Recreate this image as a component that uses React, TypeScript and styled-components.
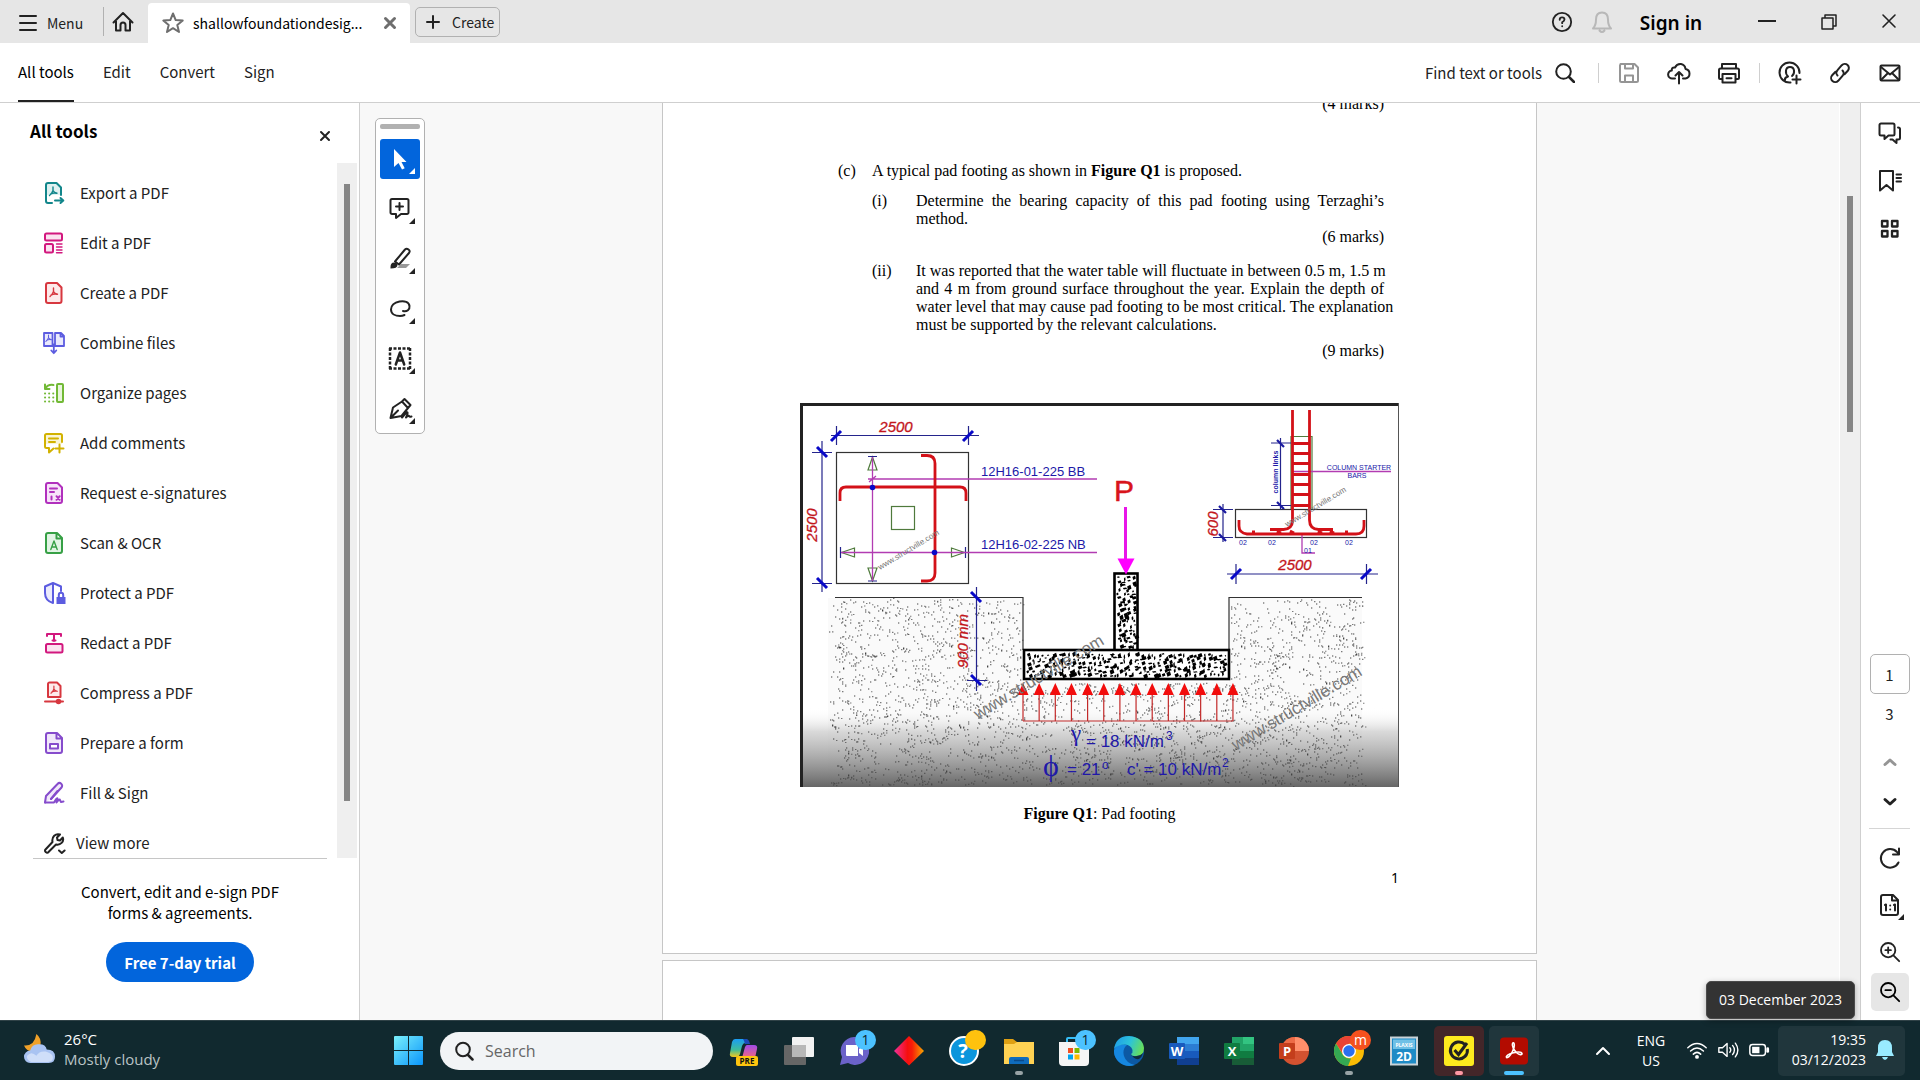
import React from "react";
import styled, { createGlobalStyle, css } from "styled-components";

const uiFont = `"Noto Sans CJK SC", "Noto Sans", sans-serif`;
const shellFont = `"Open Sans", "Noto Sans", sans-serif`;
const ink = "#222";

const GlobalStyle = createGlobalStyle`
  *, *::before, *::after { box-sizing: border-box; }
  html, body { margin: 0; height: 100%; }
  body { font-family: ${uiFont}; color: ${ink}; background: #f8f8f8; overflow: hidden; }
  button, input { font: inherit; color: inherit; }
  button { border: 0; padding: 0; background: none; cursor: pointer; }
  svg { display: block; flex: none; }
`;

const Screen = styled.div`
  display: flex;
  flex-direction: column;
  height: 100vh;
`;

/* ---------- Title bar ---------- */
const TitleBar = styled.header`
  display: flex;
  align-items: center;
  height: 43px;
  background: #e6e6e6;
  font-size: 14px;
  line-height: 20px;
`;
const MenuButton = styled.button`
  display: flex;
  align-items: center;
  gap: 9px;
  width: 103px;
  height: 43px;
  padding: 2px 0 0 18px;
`;
const Divider = styled.span<{ $h: number; $color?: string }>`
  width: 1px;
  height: ${(p) => p.$h}px;
  background: ${(p) => p.$color ?? "#b1b1b1"};
`;
const HomeButton = styled.button`
  display: grid;
  place-items: center;
  width: 44px;
  height: 43px;
  padding-right: 6px;
`;
const Tab = styled.div`
  display: flex;
  align-items: center;
  align-self: flex-end;
  width: 262px;
  height: 40px;
  padding: 0 8px 0 13px;
  border-radius: 4px 4px 0 0;
  background: #fff;
  color: #000;
`;
const TabTitle = styled.span`
  flex: 1;
  padding-left: 8px;
  white-space: nowrap;
`;
const TabIconButton = styled.button`
  display: grid;
  place-items: center;
  height: 24px;
  width: 24px;
`;
const CreateButton = styled.button`
  display: flex;
  align-items: center;
  gap: 12px;
  width: 85px;
  height: 30px;
  margin-left: 5px;
  padding-left: 10px;
  border: 1px solid #b1b1b1;
  border-radius: 5px;
`;
const WindowControls = styled.div`
  display: flex;
  align-items: center;
  height: 43px;
  margin-left: auto;
`;
const WindowButton = styled.button<{ $w: number }>`
  display: grid;
  place-items: center;
  width: ${(p) => p.$w}px;
  height: 40px;
`;
const SignIn = styled.button`
  width: 98px;
  height: 43px;
  margin-right: 14px;
  padding-top: 2px;
  font-family: "Noto Sans", sans-serif;
  font-size: 19px;
  font-weight: 600;
  color: #000;
`;

/* ---------- Tool bar ---------- */
const ToolBar = styled.nav`
  display: flex;
  align-items: center;
  height: 60px;
  border-bottom: 1px solid #cfcfcf;
  background: #fff;
  font-size: 15px;
  line-height: 22px;
`;
const ToolTabs = styled.div`
  display: flex;
  gap: 29px;
  padding-left: 18px;
`;
const ToolTab = styled.button<{ $active?: boolean }>`
  height: 59px;
  border-bottom: 2px solid ${(p) => (p.$active ? ink : "transparent")};
  color: ${(p) => (p.$active ? "#000" : ink)};
`;
const ToolActions = styled.div`
  display: flex;
  align-items: center;
  margin-left: auto;
`;
const FindButton = styled.button`
  display: flex;
  align-items: center;
  gap: 13px;
  padding-right: 23px;
`;
const ActionButton = styled.button`
  display: grid;
  place-items: center;
  width: 50px;
  height: 40px;
`;
const ActionGroup = styled.div`
  display: flex;
  padding: 0 5px;
`;

/* ---------- Side panel ---------- */
const Workspace = styled.div`
  display: flex;
  flex: 1;
  min-height: 0;
`;
const SidePanel = styled.aside`
  display: flex;
  flex-direction: column;
  width: 360px;
  border-right: 1px solid #cfcfcf;
  background: #fff;
`;
const PanelHeader = styled.div`
  display: flex;
  align-items: flex-start;
  justify-content: space-between;
  height: 60px;
  padding: 16px 22px 0 30px;
`;
const PanelTitle = styled.h2`
  margin: 0;
  font-size: 17px;
  line-height: 24px;
  font-weight: 700;
  color: #000;
`;
const PanelClose = styled(TabIconButton)`
  margin-top: 5px;
`;
const PanelBody = styled.div`
  display: flex;
  flex: 1;
  min-height: 0;
  padding-right: 2px;
`;
const ToolList = styled.ul`
  flex: 1;
  margin: 0;
  padding: 5px 0 0 42px;
  list-style: none;
  overflow: hidden;
`;
const ToolItem = styled.button<{ $tight?: boolean }>`
  display: flex;
  align-items: center;
  gap: ${(p) => (p.$tight ? 10 : 14)}px;
  width: 100%;
  height: 50px;
  font-size: 15px;
  line-height: 22px;
  text-align: left;
`;
const ScrollTrack = styled.div<{ $top: string; $bottom: string }>`
  width: 20px;
  padding: ${(p) => p.$top} 7px ${(p) => p.$bottom};
  background: #efefef;
`;
const ScrollThumb = styled.div`
  width: 6px;
  height: 100%;
  background: #868686;
`;
const Promo = styled.div`
  display: flex;
  flex-direction: column;
  align-items: center;
  margin: 0 32px 0 33px;
  padding: 22px 0 38px;
  border-top: 1px solid #c6c6c6;
  color: #000;
  font-size: 15px;
  line-height: 21px;
  text-align: center;
`;
const PromoText = styled.p`
  width: 210px;
  margin: 0 0 19px;
`;
const TrialButton = styled.button`
  width: 148px;
  height: 40px;
  border-radius: 20px;
  background: #0265dc;
  color: #fff;
  font-weight: 700;
`;

/* ---------- Document ---------- */
const Viewer = styled.main`
  position: relative;
  flex: 1;
  min-width: 0;
  overflow: hidden;
  background: #f8f8f8;
`;
const QuickTools = styled.div`
  position: absolute;
  top: 15px;
  left: 15px;
  display: flex;
  flex-direction: column;
  align-items: center;
  gap: 10px;
  width: 50px;
  padding: 5px 0 4px;
  border: 1px solid #b1b1b1;
  border-radius: 5px;
  background: #fff;
`;
const Grip = styled.span`
  width: 40px;
  height: 5px;
  border-radius: 2px;
  background: #b1b1b1;
`;
const QuickTool = styled.button<{ $active?: boolean }>`
  width: 40px;
  height: 40px;
  border-radius: 3px;
  ${(p) => p.$active && css`background: #0265dc;`}
`;
const Pages = styled.div`
  display: flex;
  flex-direction: column;
  align-items: center;
  gap: 6px;
  margin-top: -9px;
`;
const Page = styled.article`
  width: 875px;
  padding: 0 137px 66px;
  border: 1px solid #c6c6c6;
  background: #fff;
  color: #000;
  font-family: "Liberation Serif", serif;
  font-size: 16px;
  line-height: 18px;
`;
const Question = styled.section`
  padding: 0 15px 0 38px;
`;
const Marks = styled.p<{ $before?: number }>`
  margin: ${(p) => p.$before ?? 0}px 0 0;
  text-align: right;
`;
const Clause = styled.div<{ $label: number; $before: number; $indent?: number }>`
  display: grid;
  grid-template-columns: ${(p) => p.$label}px minmax(0, 1fr);
  margin-top: ${(p) => p.$before}px;
  padding-left: ${(p) => p.$indent ?? 0}px;
  text-align: justify;
`;
const Line = styled.span<{ $last?: boolean }>`
  display: block;
  white-space: nowrap;
  text-align-last: ${(p) => (p.$last ? "left" : "justify")};
`;
const Figure = styled.figure`
  margin: 43px 0 0;
`;
const Caption = styled.figcaption`
  margin-top: 18px;
  text-align: center;
`;
const PageNumber = styled.p`
  margin: 46px 0 0;
  font-family: "Noto Sans", sans-serif;
  font-size: 14px;
  text-align: right;
`;
const DocScroll = styled(ScrollTrack)`
  width: 22px;
  border-left: 1px solid #fff;
  border-right: 1px solid #cfcfcf;
`;

/* ---------- Right rail ---------- */
const Rail = styled.aside`
  display: flex;
  flex-direction: column;
  align-items: center;
  width: 59px;
  padding: 6px 2px 9px 0;
  background: #fff;
`;
const RailButton = styled.button<{ $h: number; $active?: boolean }>`
  display: grid;
  place-items: center;
  width: 38px;
  height: ${(p) => p.$h}px;
  border-radius: 5px;
  ${(p) => p.$active && css`background: #e6e6e6;`}
`;
const PageInput = styled.input`
  width: 40px;
  height: 40px;
  margin-top: auto;
  border: 1px solid #b1b1b1;
  border-radius: 5px;
  background: #fff;
  font-size: 15px;
  text-align: center;
`;
const PageTotal = styled.span`
  height: 48px;
  padding-top: 10px;
  font-size: 15px;
  line-height: 20px;
`;
const RailRule = styled.span`
  width: 41px;
  height: 1px;
  margin: 6px 0;
  background: #d5d5d5;
`;

/* ---------- Task bar ---------- */
const TaskBar = styled.footer`
  display: flex;
  align-items: center;
  height: 60px;
  border-top: 1px solid #304247;
  background: #11292f;
  color: #fff;
  font-family: ${shellFont};
  font-size: 15px;
  line-height: 20px;
`;
const Weather = styled.button`
  display: flex;
  align-items: center;
  gap: 9px;
  width: 383px;
  height: 59px;
  padding: 0 0 4px 24px;
  text-align: left;
`;
const Muted = styled.div`
  color: #b9c3c5;
`;
const AppButton = styled.button<{ $bg?: string; $mark?: string; $wide?: boolean }>`
  position: relative;
  display: grid;
  place-items: center;
  width: 50px;
  height: 50px;
  border-radius: 5px;
  background: ${(p) => p.$bg ?? "transparent"};
  ${(p) =>
    p.$mark &&
    css`
      &::after {
        content: "";
        position: absolute;
        bottom: 1px;
        left: 50%;
        width: ${p.$wide ? 20 : 8}px;
        height: 4px;
        border-radius: 2px;
        background: ${p.$mark};
        transform: translateX(-50%);
      }
    `}
`;
const Badge = styled.span<{ $bg: string; $fg?: string }>`
  position: absolute;
  top: 4px;
  right: 3px;
  width: 21px;
  height: 20px;
  border-radius: 10px;
  background: ${(p) => p.$bg};
  color: ${(p) => p.$fg ?? "#10272c"};
  font-size: 14px;
  line-height: 20px;
`;
const SearchBox = styled.label`
  display: flex;
  align-items: center;
  gap: 11px;
  width: 273px;
  height: 38px;
  margin: 0 6px 0 7px;
  padding: 0 14px;
  border-radius: 19px;
  background: #f2f4f6;
  color: #333;
  font-size: 16px;
`;
const SearchInput = styled.input`
  flex: 1;
  min-width: 0;
  padding: 0;
  border: 0;
  outline: 0;
  background: none;
  &::placeholder { color: #666; opacity: 1; }
`;
const AppRow = styled.div`
  display: flex;
  gap: 5px;
`;
const Tray = styled.div`
  display: flex;
  align-items: center;
  margin-left: auto;
  padding-right: 15px;
  font-size: 14px;
`;
const TrayButton = styled.button<{ $w: number }>`
  display: grid;
  place-items: center;
  width: ${(p) => p.$w}px;
  height: 50px;
`;
const StatusIcons = styled.button`
  display: flex;
  justify-content: space-around;
  width: 92px;
  height: 24px;
  margin: 0 4px 0 3px;
`;
const Clock = styled.button`
  position: relative;
  display: flex;
  align-items: center;
  justify-content: flex-end;
  gap: 10px;
  width: 127px;
  height: 50px;
  padding: 0 11px 2px 0;
  border-radius: 5px;
  background: #20363c;
  text-align: right;
`;
const DateTip = styled.span`
  position: absolute;
  right: 50px;
  bottom: 57px;
  width: 149px;
  height: 38px;
  border: 1px solid #4a4a4a;
  border-radius: 5px;
  background: #333;
  box-shadow: 0 2px 6px rgba(0, 0, 0, 0.3);
  line-height: 36px;
  text-align: center;
  white-space: nowrap;
`;

/* ---------- Line icon wrapper ---------- */
type IconProps = { s?: number; c?: string; w?: number; box?: number; children: React.ReactNode };
const Icon = ({ s = 24, c = ink, w = 2, box = 24, children }: IconProps) => (
  <svg width={s} height={s} viewBox={`0 0 ${box} ${box}`} fill="none" stroke={c} strokeWidth={w} strokeLinecap="round" strokeLinejoin="round" aria-hidden="true">
    {children}
  </svg>
);

const Trefoil = ({ x = 0, y = 0, k = 1 }: { x?: number; y?: number; k?: number }) => (
  <path transform={`translate(${x} ${y}) scale(${k})`} strokeWidth="1.4" d="M4 0v3.5Q3.300 6 0.500 8.500M4 3.500Q5 5.500 8 6.200M1.500 7.200Q4 5.600 7.500 6.200" />
);

const toolIcons: Record<string, React.ReactNode> = {
  export: (
    <Icon c="#12868b"><path fill="#dff1f1" stroke="none" d="M4 2h11l4 4v8H4z" /><path d="M10 22H6a2 2 0 0 1-2-2V4a2 2 0 0 1 2-2h8.500L19 6.500V14M13 19.500h8M18.500 17l2.800 2.500-2.800 2.500" /><Trefoil x={7} y={6} /></Icon>
  ),
  edit: (
    <Icon c="#d2187e"><rect x="3" y="2.500" width="17" height="7" rx="1.500" fill="#fbe3f0" /><rect x="3" y="13" width="8" height="8.500" rx="1.500" fill="#fbe3f0" /><path d="M14.500 13H20M14.500 16H20M14.500 19H20M14.500 21.700H20" strokeWidth="1.400" /></Icon>
  ),
  create: (
    <Icon c="#d7373f"><path fill="#fdeaea" d="M6 2h9l4.500 4.500V20a2 2 0 0 1-2 2H6a2 2 0 0 1-2-2V4a2 2 0 0 1 2-2z" /><Trefoil x={7.500} y={7} /></Icon>
  ),
  combine: (
    <Icon c="#5c5ce0" w={1.800}><path fill="#e9e9fc" d="M2 15V2h8.500v13zM13 15V2h6l3 3v10h-9M11.800 13.500V22M9.300 19.500l2.500 2.700 2.500-2.700M18.500 2v3.500H22" /><Trefoil x={3.500} y={4} k={0.750} /></Icon>
  ),
  organize: (
    <Icon c="#72b936"><rect x="15" y="3" width="6" height="18" rx="1" fill="#e8f5dc" /><path d="M3 3.500v4.500h4.500M3.500 7.500Q6 3 11.500 4" /><path strokeDasharray="0.100 4" d="M3 12.500h9M3 16.500h9M3 20.500h9" /></Icon>
  ),
  comment: (
    <Icon c="#d2b200"><path fill="#faf5d5" stroke="none" d="M3 3h17v10H3z" /><path d="M20 11V4.500a1.500 1.500 0 0 0-1.500-1.500h-14A1.500 1.500 0 0 0 3 4.500v11A1.500 1.500 0 0 0 4.500 17H7v4.500l4.500-4M7 7.500h9M7 11h6M17.500 13.500v8M13.500 17.500h8" /></Icon>
  ),
  esign: (
    <Icon c="#b130bd"><path fill="#f7e3f9" d="M6 2h9.500L20 6.500V20a2 2 0 0 1-2 2H6a2 2 0 0 1-2-2V4a2 2 0 0 1 2-2z" /><path d="M8 7.500h7M8 11h4M9.500 15.500v3M14.500 15.200l3.200 3.600M17.700 15.200l-3.200 3.600" /></Icon>
  ),
  ocr: (
    <Icon c="#37a046"><path fill="#e2f4e5" d="M6 2h9l5 5v13a2 2 0 0 1-2 2H6a2 2 0 0 1-2-2V4a2 2 0 0 1 2-2zM14.500 2v5.500H20" /><path strokeWidth="1.400" d="M8.800 18.500 12 10l3.200 8.500M10 16h4" /></Icon>
  ),
  protect: (
    <Icon c="#5c5ce0"><path fill="#ebebfc" stroke="none" d="M3 5l8-3v20C5 19 3 16 3 13z" /><path d="M19 10V5.500L11 2 3 5.500V12c0 5 3 8.500 8 10V2" /><path fill="#5c5ce0" stroke="none" d="M14.500 16h9v7h-9z" /><path d="M16.800 16v-2a2.200 2.200 0 0 1 4.400 0v2" /></Icon>
  ),
  redact: (
    <Icon c="#d2187e"><path d="M5 5V3h14v2M12 3v7M10.500 9.500h3" /><rect x="4" y="13" width="16.500" height="8.500" rx="1.500" fill="#fbe3f0" /></Icon>
  ),
  compress: (
    <Icon c="#d7373f"><path fill="#fdeaea" d="M8 1.500h7l3.500 3.500v11H6V3a1.500 1.500 0 0 1 2-1.500z" /><Trefoil x={8.500} y={5} k={0.850} /><path d="M3 20.500h18" /><circle cx="16.500" cy="20.500" r="1.800" fill="#d7373f" /></Icon>
  ),
  form: (
    <Icon c="#864ccc"><path fill="#f1e8fa" d="M6 2h9l5 5v13a2 2 0 0 1-2 2H6a2 2 0 0 1-2-2V4a2 2 0 0 1 2-2zM14.500 2v5.500H20" /><path fill="#fff" d="M8 13h8v4.500H8z" /></Icon>
  ),
  fill: (
    <Icon c="#864ccc"><path fill="#f1e8fa" d="M3 21.500 4 15 15.500 3a2.500 2.500 0 0 1 4 3.500L9 18" /><path d="M3 21.500h9q3-5 3.500-4t-1 4q3-4 3.500-2.500T19 21l2.500-.5M9 18l6.500-8" /></Icon>
  ),
  more: (
    <Icon><path d="M4.500 21.500a1.800 1.800 0 0 1-1-3L10.500 11c-1-5 3-9 7.500-7.500l-3 3 .5 2.500 2.500.5 2.800-3c1.500 4-2.300 8-6.800 7L7 20.500a2 2 0 0 1-2.500 1zM17 19.500l2.800 2.500 2.800-2.500" /></Icon>
  ),
};

const tools: [string, string][] = [
  ["export", "Export a PDF"],
  ["edit", "Edit a PDF"],
  ["create", "Create a PDF"],
  ["combine", "Combine files"],
  ["organize", "Organize pages"],
  ["comment", "Add comments"],
  ["esign", "Request e-signatures"],
  ["ocr", "Scan & OCR"],
  ["protect", "Protect a PDF"],
  ["redact", "Redact a PDF"],
  ["compress", "Compress a PDF"],
  ["form", "Prepare a form"],
  ["fill", "Fill & Sign"],
  ["more", "View more"],
];

const quickTools: { name: string; active?: boolean; art: React.ReactNode }[] = [
  { name: "Select", active: true, art: <path fill="#fff" stroke="none" d="M14 10v18l4.500-4 3.500 6.500 2.700-1.300L21.500 23h5z" /> },
  { name: "Comment", art: <path d="M12 10h15a1.500 1.500 0 0 1 1.500 1.500v12A1.500 1.500 0 0 1 27 25h-6l-5 4v-4h-4a1.500 1.500 0 0 1-1.500-1.500v-12A1.500 1.500 0 0 1 12 10zM19.500 14v7M16 17.500h7" /> },
  { name: "Highlight", art: <><path stroke="none" fill="#999" d="M21 25h9l-4 4h-9z" /><path d="M15 22.500 25 10.500q1.500-1.500 3.500 0t.5 3.500L19 25.500z" /><path fill={ink} stroke="none" d="M10.500 28q0-4.500 3.500-4.500t3.500 2.500q0 3.500-7 3.500z" /></> },
  { name: "Draw", art: <path d="M23 22c4 1 7-1.500 6.500-5-.5-4-5-5.500-10-4.500-5.500 1-8.500 4.500-8.500 8 0 4.500 4.500 6.500 9 6.500 2 0 3.500-.5 4.500-1" /> },
  { name: "Add text", art: <><path strokeWidth="2.500" strokeDasharray="3 1.500" strokeLinecap="butt" d="M9 9.500h22M9 29.500h22M10 9v21M30 9v21" /><path strokeWidth="2.500" d="M15.800 25.500 20 13.500l4.200 12M17.300 21.500h5.400" /></> },
  { name: "Sign", art: <path d="M10.500 29 13 18.500l9-6 6 6.500-6.500 8zM11 28.500l7-7M22 12.500l2.500-2.500 6 6-2.500 3M22 28.500q5-6 5.500-5t-1.500 5q2.500-2.500 3-1.500t2.500.5" /> },
];

/* ---------- Pad footing drawing ---------- */
const randomSource = (seed: number) => () => {
  seed = (seed * 1664525 + 1013904223) % 4294967296;
  return seed / 4294967296;
};

const soilPath = () => {
  const rnd = randomSource(7);
  let d = "";
  for (let i = 0; i < 2900; i++) {
    const px = Math.round(829 + rnd() * 533);
    const py = Math.round(600 + rnd() * 185);
    const pair = rnd();
    const dy = rnd() * 5 - 2;
    if (px > 1020 && px < 1231 && py < 684) continue;
    d += `M${px} ${py}h1.300`;
    if (pair < 0.4) d += `m2 ${dy.toFixed(1)}h1`;
  }
  return d;
};

const aggregatePath = (x0: number, y0: number, x1: number, y1: number, seed: number) => {
  const rnd = randomSource(seed);
  let d = "";
  for (let y = y0; y < y1 - 3; y += 4) {
    for (let x = x0; x < x1 - 3; x += 5) {
      const px = x + rnd() * 4;
      const py = y + rnd() * 3;
      const a = 1 + rnd() * 3;
      const b = 1 + rnd() * 3;
      d += `M${px.toFixed(1)} ${py.toFixed(1)}l${a.toFixed(1)} ${(-b / 2).toFixed(1)}l${(a / 3).toFixed(1)} ${b.toFixed(1)}l${(-a).toFixed(1)} ${(b / 2).toFixed(1)}z`;
    }
  }
  return d;
};

const Sketch = styled.svg`
  width: 100%;
  height: auto;
  font-family: "Liberation Sans", sans-serif;
`;
const DimText = styled.text`
  fill: #c3161c;
  stroke: #c3161c;
  stroke-width: 0.3px;
  font-size: 15px;
  font-style: italic;
  text-anchor: middle;
`;
const NoteText = styled.text<{ $size: number }>`
  fill: #2018a8;
  font-size: ${(p) => p.$size}px;
`;
const WatermarkText = styled.text<{ $size: number }>`
  fill: #777;
  font-size: ${(p) => p.$size}px;
`;

const Tick = ({ x, y, back }: { x: number; y: number; back?: boolean }) => (
  <path stroke="#0909c8" strokeWidth="3" d={back ? `M${x - 5} ${y - 5}l10 10` : `M${x - 5} ${y + 5}l10-10`} />
);

const arrows = Array.from({ length: 14 }, (_, i) => 1023 + i * 16.15);

const FootingDrawing = () => (
  <Sketch viewBox="800 403 599 384" role="img" aria-label="Pad footing plan and section">
    <defs>
      <linearGradient id="shade" x1="0" y1="0" x2="0" y2="1">
        <stop offset="0" stopColor="#fff" stopOpacity="0" />
        <stop offset="0.300" stopColor="#c8c8c8" stopOpacity="0.700" />
        <stop offset="1" stopColor="#666" />
      </linearGradient>
    </defs>
    <rect x="800" y="403" width="599" height="384" fill="#fff" />
    <path d="M828 598H1023V682H1229V598H1362V787H828z" fill="#fafafa" />
    <rect x="800" y="708" width="599" height="79" fill="url(#shade)" />
    <path d={soilPath()} stroke="#444" strokeWidth="1.100" />

    <g fill="none" stroke="#333" strokeWidth="1.200">
      <path d="M835 597.500H1023V650M1229 650V597.500H1362" />
      <rect x="836.500" y="452.500" width="132" height="131" />
      <rect x="1235.500" y="509.500" width="131" height="28" />
    </g>
    <g fill="none" stroke="#4f7a3c" strokeWidth="1.200">
      <rect x="891.500" y="506.500" width="23" height="23" />
      <path d="M1291 509V436.500h21V509" />
      <path d="M868 470h9l-4.500-13zM868 568h9l-4.500 13zM854.500 548v9l-13-4.500zM951.500 548v9l13-4.500z" />
    </g>
    <g fill="none" stroke="#24248c" strokeWidth="1.200">
      <path d="M831 435.500H979M836.500 426v19M968.500 426v19M822 441V592M812 452.500h20M812 583.500h20" />
      <path d="M868 456.500h9M868 581h9M840.500 547v11M965.500 547v11M976.500 587V691M967 680.500h20" />
      <path d="M1280.500 438v72M1271 443h20M1271 505.500h20M1223 504v38M1213 509.500h20M1213 537.500h20" />
      <path d="M1227 574H1378M1236 564v20M1366.500 564v20" />
    </g>
    <g fill="none" stroke="#b23cb2" strokeWidth="1.300">
      <path d="M868 479H1097M872.500 457V581M841 552.500H1097M869 482l7-6M1292 471.500H1391M1302 535v18h13" />
    </g>
    <g fill="none" stroke="#d31118" strokeWidth="2.800">
      <path d="M840 501v-8q0-6 6-6H960q6 0 6 6v8M921 455.500h6q8 0 8 8V573q0 8-8 8h-6" />
      <path d="M1292.500 410V520q0 9-9 9.500H1270M1309.500 410V520q0 9 9 9.500H1333" />
      <path d="M1292 443.500h18M1292 453.500h18M1292 463.500h18M1292 474.500h18M1292 484.500h18M1292 494.500h18M1292 505.500h18" />
      <path d="M1239 520v6q0 7 8 8H1356q8 0 8-8v-6M1277 531l4 2M1290 531l4 2M1318 531l4 2M1330 531l4 2M1252 532h3M1345 532h3" />
    </g>
    <g fill="#0909c8">
      <circle cx="872.500" cy="487.500" r="2.800" />
      <circle cx="934.500" cy="552.500" r="2.800" />
    </g>
    <Tick x={836} y={436} /><Tick x={968} y={436} />
    <Tick x={822} y={452} back /><Tick x={822} y={583} back />
    <Tick x={976} y={597} back /><Tick x={976} y={680} back />
    <Tick x={1236} y={574} /><Tick x={1366} y={574} />
    <path stroke="#1a1aa0" strokeWidth="2.200" d="M1277 440l7 7M1277 502l7 7M1219 506l7 7M1219 534l7 7" />

    <WatermarkText $size={8} transform="translate(880 570) rotate(-31)">www.structville.com</WatermarkText>
    <WatermarkText $size={8} transform="translate(1287 527) rotate(-31)">www.structville.com</WatermarkText>

    <rect x="1114.500" y="573.500" width="23" height="77" fill="#fff" stroke="#000" strokeWidth="2.600" />
    <rect x="1024" y="650" width="205" height="29" fill="#fff" stroke="#000" strokeWidth="2.600" />
    <path d={aggregatePath(1116, 576, 1137, 650, 11)} />
    <path d={aggregatePath(1026, 653, 1228, 678, 23)} />
    <path d="M1125.500 507v53" stroke="#e815e8" strokeWidth="3" />
    <path d="M1117.500 558.500h17l-8.500 16z" fill="#f0f" />

    <path fill="none" stroke="#c22a2a" strokeWidth="1.200" d={`M1023 721H1233${arrows.map((x) => `M${x} 694V721`).join("")}`} />
    <path fill="#f20d0d" d={arrows.map((x) => `M${x - 5.5} 695h11l-5.500-12z`).join("")} />

    <WatermarkText $size={17} transform="translate(978 720) rotate(-31)">www.structville.com</WatermarkText>
    <WatermarkText $size={17} transform="translate(1236 751) rotate(-31)">www.structville.com</WatermarkText>

    <DimText x="896" y="432">2500</DimText>
    <DimText transform="translate(817 525) rotate(-90)">2500</DimText>
    <DimText transform="translate(968 641) rotate(-90)">900 mm</DimText>
    <DimText transform="translate(1218 524) rotate(-90)">600</DimText>
    <DimText x="1295" y="570">2500</DimText>
    <text x="1114" y="501" fontSize="30" fill="#d8141a" stroke="#d8141a" strokeWidth="0.500">P</text>

    <NoteText $size={13} x="981" y="476">12H16-01-225 BB</NoteText>
    <NoteText $size={13} x="981" y="549">12H16-02-225 NB</NoteText>
    <NoteText $size={7} x="1359" y="470" textAnchor="middle">COLUMN STARTER</NoteText>
    <NoteText $size={7} x="1357" y="478" textAnchor="middle">BARS</NoteText>
    <NoteText $size={7} fontWeight="bold" textAnchor="middle" transform="translate(1278 472) rotate(-90)">column links</NoteText>
    {[1243, 1272, 1314, 1349].map((x) => (
      <NoteText key={x} $size={7} x={x} y="545" textAnchor="middle">02</NoteText>
    ))}
    <NoteText $size={7} x="1304" y="553">01</NoteText>
    <NoteText $size={23} x="1071" y="741" fontFamily="Liberation Serif">γ</NoteText>
    <NoteText $size={17} x="1086" y="747">= 18 kN/m</NoteText>
    <NoteText $size={12} x="1166" y="740">3</NoteText>
    <NoteText $size={30} x="1043" y="776" fontFamily="Liberation Serif">ϕ</NoteText>
    <NoteText $size={17} x="1067" y="775">= 21</NoteText>
    <NoteText $size={12} x="1102" y="769">o</NoteText>
    <NoteText $size={17} x="1127" y="775">c' = 10 kN/m</NoteText>
    <NoteText $size={12} x="1222" y="767">2</NoteText>

    <path d="M800 404.500H1398" stroke="#222" strokeWidth="3" />
    <path d="M801.500 403V787" stroke="#222" strokeWidth="3" />
    <path d="M1398.500 403V787" stroke="#555" strokeWidth="1" />
  </Sketch>
);

/* ---------- Task bar pictures ---------- */
const Art = ({ children, s = 30 }: { children: React.ReactNode; s?: number }) => (
  <svg width={s} height={s} viewBox="0 0 30 30" aria-hidden="true">{children}</svg>
);
const LetterArt = ({ x, y, size = 13, fill = "#fff", children }: { x: number; y: number; size?: number; fill?: string; children: string }) => (
  <text x={x} y={y} fontSize={size} fontWeight="700" fill={fill} textAnchor="middle" fontFamily="Open Sans">{children}</text>
);

type AppEntry = { name: string; art: React.ReactNode; bg?: string; mark?: string; wide?: boolean; badge?: React.ReactNode };
const apps: AppEntry[] = [
  {
    name: "Copilot",
    art: (
      <Art>
        <defs>
          <linearGradient id="cpa" x1="0" y1="0" x2="0" y2="1"><stop offset="0" stopColor="#1a9df4" /><stop offset="0.600" stopColor="#3fbd9a" /><stop offset="1" stopColor="#f3c81c" /></linearGradient>
          <linearGradient id="cpb" x1="0" y1="0" x2="0" y2="1"><stop offset="0" stopColor="#a04be8" /><stop offset="1" stopColor="#f4667c" /></linearGradient>
        </defs>
        <path fill="url(#cpa)" d="M6 3h10q3 0 4 4h-4q-2 0-3 3l-2 8q-1 3-4 3H4Q0 21 1 17L3 6q1-3 3-3z" />
        <path fill="#1c49b8" d="M14 3h3q3 0 4 5h-5q-1-4-2-5z" />
        <path fill="url(#cpb)" d="M18 9h7q4 0 3 4l-2 9H13l3-11q1-2 2-2z" />
        <rect x="7" y="20" width="22" height="10" rx="2" fill="#fec50f" />
        <LetterArt x={18} y={28} size={8} fill="#111">PRE</LetterArt>
      </Art>
    ),
  },
  { name: "Task view", art: <Art><rect x="0" y="9" width="22" height="20" rx="1" fill="#666" /><rect x="8" y="1" width="22" height="20" rx="1" fill="#f2f2f2" /><path fill="#b8b8b8" d="M8 9h14v12H8z" /></Art> },
  { name: "Chat", art: <Art><path fill="#6b62c9" d="M15 1a14 14 0 1 1-6 26l-8 2 2-8A14 14 0 0 1 15 1z" /><path fill="#fff" d="M7 9h11q1 0 1 1v10H8q-1 0-1-1zM20 13l4-3v10l-4-3z" /></Art>, badge: <Badge $bg="#4cc2ff">1</Badge> },
  {
    name: "Diamond",
    art: (
      <Art>
        <defs><linearGradient id="dia"><stop offset="0" stopColor="#f0309a" /><stop offset="0.450" stopColor="#f60f0f" /><stop offset="0.600" stopColor="#f81c08" /><stop offset="1" stopColor="#f7a800" /></linearGradient></defs>
        <path fill="url(#dia)" d="M15 0l15 15-15 14.500L0 15z" />
      </Art>
    ),
  },
  { name: "Help", art: <Art><circle cx="15" cy="15" r="14" fill="#0b95dc" stroke="#fff" strokeWidth="2" /><LetterArt x={14} y={22} size={20}>?</LetterArt></Art>, badge: <Badge $bg="#ffc20e" /> },
  { name: "File Explorer", mark: "#98a3a6", art: <Art><path fill="#dfa013" d="M0 3h9l4 3H30v10H0z" /><path fill="#ffd253" d="M0 8h10l3-2h17v22H0z" /><path fill="#0f6cbd" d="M5 28v-5q0-2 2-2h16q2 0 2 2v5z" /><path stroke="#0a4a8a" strokeWidth="1.500" d="M10 24.500h10" /></Art> },
  { name: "Store", art: <Art><path fill="none" stroke="#36bdf5" strokeWidth="2" d="M8 7V3q0-1 1-1h12" /><path fill="#f5f5f5" d="M0 6h30v20q0 4-4 4H4q-4 0-4-4z" /><path fill="#f25022" d="M9 12h5v5H9z" /><path fill="#7fba00" d="M15.500 12h5v5h-5z" /><path fill="#00a4ef" d="M9 18.500h5v5H9z" /><path fill="#ffb900" d="M15.500 18.500h5v5h-5z" /></Art>, badge: <Badge $bg="#4cc2ff">1</Badge> },
  {
    name: "Edge",
    art: (
      <Art>
        <defs><linearGradient id="edg" x1="0" y1="0.300" x2="1" y2="0.600"><stop offset="0" stopColor="#1f9ee8" /><stop offset="0.500" stopColor="#2dc4d8" /><stop offset="1" stopColor="#6be052" /></linearGradient></defs>
        <circle cx="15" cy="15" r="15" fill="#0c59a4" />
        <path fill="#1687e0" d="M0 14Q4 7 13 9q-5 4-3 11t11 9Q12 32 5 26-.5 21 0 14z" />
        <path fill="url(#edg)" d="M0 13Q2 0 15 0q14 1 15 12 0 8-8 8-5 0-5-2 2-1 1.500-4Q17 9 11 8.500 4 8.500 0 13z" />
        <path fill="#11292f" d="M17 18q0 3 6 2 4-.5 6-3-1 4-4 6-5 1-8-5z" opacity="0.900" />
      </Art>
    ),
  },
  { name: "Word", art: <Art><path fill="#41a5ee" d="M8 1h22v7H8z" /><path fill="#2b7cd3" d="M8 8h22v7H8z" /><path fill="#185abd" d="M8 15h22v7H8z" /><path fill="#103f91" d="M8 22h22v7H8z" /><rect y="7" width="16" height="16" rx="1" fill="#185abd" /><LetterArt x={8} y={19.500}>W</LetterArt></Art> },
  { name: "Excel", art: <Art><path fill="#21a366" d="M8 1h11v14H8z" /><path fill="#33c481" d="M19 1h11v7H19z" /><path fill="#21a366" d="M19 8h11v7H19z" /><path fill="#107c41" d="M8 15h22v7H8z" /><path fill="#185c37" d="M8 22h22v7H8z" /><rect y="7" width="16" height="16" rx="1" fill="#107c41" /><LetterArt x={8} y={19.500}>X</LetterArt></Art> },
  { name: "PowerPoint", art: <Art><circle cx="16" cy="15" r="14" fill="#d35230" /><path fill="#ff8f6b" d="M16 1a14 14 0 0 1 14 14H16z" /><path fill="#ed6c47" d="M16 1A14 14 0 0 0 2 15h14z" /><rect y="7" width="16" height="16" rx="1" fill="#c43e1c" /><LetterArt x={8} y={19.500}>P</LetterArt></Art> },
  { name: "Chrome", mark: "#98a3a6", art: <Art><circle cx="15" cy="15" r="15" fill="#fbbc04" /><path fill="#ea4335" d="M2 7.500A15 15 0 0 1 28 7.500H15L9 18z" /><path fill="#34a853" d="M2 7.500 9 19q3 4 8 3.500L14 30A15 15 0 0 1 2 7.500z" /><circle cx="15" cy="15" r="7" fill="#fff" /><circle cx="15" cy="15" r="5.700" fill="#2a6ff0" /></Art>, badge: <Badge $bg="#f4511e" $fg="#fff">m</Badge> },
  { name: "Plaxis 2D", art: <Art><rect x="2" y="1.500" width="26" height="27" fill="#1e8bc6" stroke="#c9d3d8" strokeWidth="2" /><path fill="#6fc0e6" d="M4 3.500h22V13H4z" /><LetterArt x={15} y={11} size={5}>PLAXIS</LetterArt><LetterArt x={15} y={24.500} size={12}>2D</LetterArt></Art> },
  { name: "Norton", bg: "#432629", mark: "#ff99a4", art: <Art><rect width="30" height="30" rx="3" fill="#fdea1e" /><path fill="none" stroke="#222" strokeWidth="3" d="M21 8.500A8.500 8.500 0 1 0 23.300 13" /><path fill="none" stroke="#222" strokeWidth="3" d="M10.500 14l4 4.500L23 7" /></Art> },
  { name: "Acrobat", bg: "#20363c", mark: "#4cc2ff", wide: true, art: <Art><rect x="1" y="1.500" width="28" height="27" rx="4" fill="#b30b00" /><path fill="none" stroke="#fff" strokeWidth="1.600" strokeLinejoin="round" d="M7.500 21.500c-1-1.500 2-3.500 6-4.500s9-1.300 9.500.5-3 1.300-5-.5c-3-2.500-5.500-7.500-4.500-9.500s2.500 0 1.500 4-5 11-7.500 10z" /></Art> },
];

export default function App() {
  return (
    <Screen>
      <GlobalStyle />
      <TitleBar>
        <MenuButton>
          <Icon s={20} box={20}><path d="M2 3h16M2 10h16M2 17h16" /></Icon>
          Menu
        </MenuButton>
        <Divider $h={29} />
        <HomeButton aria-label="Home">
          <Icon s={24}><path d="M2.500 12.500 12 3l9.500 9.500M5 11v9.500h4.500V15a2.500 2.500 0 0 1 5 0v5.500H19V11" /></Icon>
        </HomeButton>
        <Tab>
          <TabIconButton aria-label="Star file">
            <Icon s={24} c="#6e6e6e"><path d="M12 2.500l2.700 6.600 7 .5-5.400 4.500 1.700 6.900-6-3.800-6 3.800 1.700-6.900-5.400-4.500 7-.5z" /></Icon>
          </TabIconButton>
          <TabTitle>shallowfoundationdesig...</TabTitle>
          <TabIconButton aria-label="Close tab">
            <Icon s={14} box={14} c="#6e6e6e" w={3}><path d="M2.500 2.500l9 9M11.500 2.500l-9 9" /></Icon>
          </TabIconButton>
        </Tab>
        <CreateButton>
          <Icon s={14} box={14}><path d="M7 1v12M1 7h12" /></Icon>
          Create
        </CreateButton>
        <WindowControls>
          <WindowButton $w={40} aria-label="Help">
            <Icon s={22} ><circle cx="12" cy="12" r="10" /><path d="M9.500 9.500q0-2.500 2.600-2.500t2.600 2.300q0 1.500-2.500 3v1M12.200 16.500v.2" /></Icon>
          </WindowButton>
          <WindowButton $w={40} aria-label="Notifications">
            <Icon s={24} c="#b8b8b8"><path d="M3 18.500q3-3 3-9 0-7 6-7t6 7q0 6 3 9zM9.500 20.500q2.500 3 5 0" /></Icon>
          </WindowButton>
          <SignIn>Sign in</SignIn>
          <WindowButton $w={66} aria-label="Minimize">
            <Icon s={20} box={20}><path d="M1 9h18" strokeLinecap="butt" /></Icon>
          </WindowButton>
          <WindowButton $w={58} aria-label="Restore">
            <Icon s={18} box={18} w={1.500}><path d="M2 5h11v11H2zM5 5V2h11v11h-3" /></Icon>
          </WindowButton>
          <WindowButton $w={62} aria-label="Close">
            <Icon s={18} box={18} w={1.600}><path d="M3 2l12 12M15 2L3 14" /></Icon>
          </WindowButton>
        </WindowControls>
      </TitleBar>

      <ToolBar>
        <ToolTabs>
          <ToolTab $active>All tools</ToolTab>
          <ToolTab>Edit</ToolTab>
          <ToolTab>Convert</ToolTab>
          <ToolTab>Sign</ToolTab>
        </ToolTabs>
        <ToolActions>
          <FindButton>
            Find text or tools
            <Icon s={20} box={20}><circle cx="8.500" cy="8.500" r="7.300" /><path d="M14 14l5 5" strokeWidth="2.500" /></Icon>
          </FindButton>
          <Divider $h={20} $color="#cfcfcf" />
          <ActionGroup>
            <ActionButton aria-label="Save"><Icon s={24} c="#959595"><path d="M3.500 3h14l3.500 3.500v13a1.500 1.500 0 0 1-1.500 1.500h-15A1.500 1.500 0 0 1 3 19.500v-15zM8 3v4.500h8V3M8 21v-6.500h8V21" /></Icon></ActionButton>
            <ActionButton aria-label="Upload"><Icon s={24}><path d="M8 17.500H5.500a4 4 0 0 1-.7-8Q4.500 6 8 6.500 10 2.500 14 3q4 .7 4.500 5 4 .7 4 4.700T18.500 17.500H16M12 22.500V11M8.500 14.500 12 11l3.500 3.500" /></Icon></ActionButton>
            <ActionButton aria-label="Print"><Icon s={24}><path d="M5 18H3a1 1 0 0 1-1-1V9a1.500 1.500 0 0 1 1.500-1.500h17A1.500 1.500 0 0 1 22 9v8a1 1 0 0 1-1 1h-2M5 7.500V3h14v4.500M5.500 13h13v8.500h-13zM9.500 17.300h5" /></Icon></ActionButton>
          </ActionGroup>
          <Divider $h={20} $color="#cfcfcf" />
          <ActionGroup>
            <ActionButton aria-label="Share with people"><Icon s={24}><path d="M12.500 21.500A10 10 0 1 1 21.500 12M7 19q-.5-2.500 3-3.500-2.500-2.500-2-6 .5-3.500 4-3.500t4 3.500q.5 3.500-2 5.500M18.500 14.500v8M14.500 18.500h8" /></Icon></ActionButton>
            <ActionButton aria-label="Copy link"><Icon s={24}><path d="M9.500 14.500a3.800 3.800 0 0 1 0-5.300l4.300-5a4 4 0 0 1 6 5.500l-3.300 3.600M14.500 9.500a3.800 3.800 0 0 1 0 5.300l-4.300 5a4 4 0 0 1-6-5.500l3.300-3.600" /></Icon></ActionButton>
            <ActionButton aria-label="Email"><Icon s={24}><rect x="2.500" y="4.500" width="19" height="15" rx="1" /><path d="M3 6l9 7.500L21 6M3.500 18.500l6-6M20.500 18.500l-6-6" /></Icon></ActionButton>
          </ActionGroup>
        </ToolActions>
      </ToolBar>

      <Workspace>
        <SidePanel>
          <PanelHeader>
            <PanelTitle>All tools</PanelTitle>
            <PanelClose aria-label="Close panel">
              <Icon s={12} box={12} w={2}><path d="M2 2l8 8M10 2l-8 8" /></Icon>
            </PanelClose>
          </PanelHeader>
          <PanelBody>
            <ToolList>
              {tools.map(([id, label]) => (
                <li key={id}>
                  <ToolItem $tight={id === "more"}>
                    {toolIcons[id]}
                    {label}
                  </ToolItem>
                </li>
              ))}
            </ToolList>
            <ScrollTrack $top="21px" $bottom="57px"><ScrollThumb /></ScrollTrack>
          </PanelBody>
          <Promo>
            <PromoText>Convert, edit and e-sign PDF forms &amp; agreements.</PromoText>
            <TrialButton>Free 7-day trial</TrialButton>
          </Promo>
        </SidePanel>

        <Viewer>
          <Pages>
            <Page>
              <Question>
                <Marks>(4 marks)</Marks>
                <Clause $label={34} $before={49}>
                  <span>(c)</span>
                  <span>A typical pad footing as shown in <b>Figure Q1</b> is proposed.</span>
                </Clause>
                <Clause $label={44} $before={12} $indent={34}>
                  <span>(i)</span>
                  <div>
                    <Line>Determine the bearing capacity of this pad footing using Terzaghi’s</Line>
                    <Line $last>method.</Line>
                  </div>
                </Clause>
                <Marks>(6 marks)</Marks>
                <Clause $label={44} $before={16} $indent={34}>
                  <span>(ii)</span>
                  <div>
                    <Line>It was reported that the water table will fluctuate in between 0.5 m, 1.5 m</Line>
                    <Line>and 4 m from ground surface throughout the year. Explain the depth of</Line>
                    <Line>water level that may cause pad footing to be most critical. The explanation</Line>
                    <Line $last>must be supported by the relevant calculations.</Line>
                  </div>
                </Clause>
                <Marks $before={8}>(9 marks)</Marks>
              </Question>
              <Figure>
                <FootingDrawing />
                <Caption><b>Figure Q1</b>: Pad footing</Caption>
              </Figure>
              <PageNumber>1</PageNumber>
            </Page>
            <Page />
          </Pages>
          <QuickTools>
            <Grip />
            {quickTools.map((t) => (
              <QuickTool key={t.name} $active={t.active} aria-label={t.name}>
                <Icon s={40} box={40}>
                  {t.art}
                  <path stroke="none" fill={t.active ? "#fff" : ink} d="M35 29v6h-6z" />
                </Icon>
              </QuickTool>
            ))}
          </QuickTools>
        </Viewer>
        <DocScroll $top="93px" $bottom="588px"><ScrollThumb /></DocScroll>

        <Rail>
          <RailButton $h={48} aria-label="Comments"><Icon s={24}><path d="M3 2.500h12a1.500 1.500 0 0 1 1.500 1.500v9a1.500 1.500 0 0 1-1.500 1.500h-4.500L6.500 18v-3.500H3A1.500 1.500 0 0 1 1.500 13V4A1.500 1.500 0 0 1 3 2.500zM20 6.500q2 0 2 1.500v9q0 1.500-2 1.500h-1.500v3.500l-4-3.500h-2" /></Icon></RailButton>
          <RailButton $h={48} aria-label="Bookmarks"><Icon s={24}><path d="M2 2h13v19.500l-6.500-5.500L2 21.500zM18.500 5.500H23M18.500 9H23M18.500 12.500H23" /></Icon></RailButton>
          <RailButton $h={47} aria-label="Page thumbnails"><Icon s={24} w={2.300}><path d="M4 4h5.500v5.500H4zM14 4h5.500v5.500H14zM4 14h5.500v5.500H4zM14 14h5.500v5.500H14z" /></Icon></RailButton>
          <PageInput aria-label="Page number" defaultValue="1" />
          <PageTotal>3</PageTotal>
          <RailButton $h={40} aria-label="Previous page"><Icon s={16} box={16} w={3} c="#959595"><path d="M3 10.500 8 6l5 4.500" /></Icon></RailButton>
          <RailButton $h={40} aria-label="Next page"><Icon s={16} box={16} w={3}><path d="M3 5.500 8 10l5-4.500" /></Icon></RailButton>
          <RailRule />
          <RailButton $h={46} aria-label="Rotate"><Icon s={24}><path d="M20.500 16.500A9.300 9.300 0 1 1 19 6l2 2.500M21 2.500v6h-6" /></Icon></RailButton>
          <RailButton $h={50} aria-label="Page view">
            <Icon s={30} box={30}><path d="M8 4h10l5 5v13a2 2 0 0 1-2 2H8a2 2 0 0 1-2-2V6a2 2 0 0 1 2-2zM17 4v5.500h6M10 14l1-.5v6M19 14l1-.5v6M15.200 14.500v.1M15.200 18.500v.1" /><path stroke="none" fill={ink} d="M29 23v6h-6z" /></Icon>
          </RailButton>
          <RailButton $h={42} aria-label="Zoom in"><Icon s={22}><circle cx="10" cy="10" r="7.800" /><path d="M16 16l6 6M7 10h6M10 7v6" /></Icon></RailButton>
          <RailButton $h={38} $active aria-label="Zoom out"><Icon s={22} c="#000"><circle cx="10" cy="10" r="7.800" /><path d="M16 16l6 6M7 10h6" /></Icon></RailButton>
        </Rail>
      </Workspace>

      <TaskBar>
        <Weather>
          <Art s={31}>
            <path fill="#f0a129" d="M12 1q5 4 4 11l-8 6Q2 17 0 12q10 1 12-11z" />
            <path fill="#a9c3f2" d="M6 29a6 6 0 0 1 0-12q2-7 9-6 6 0 7 5 8 0 8 7 0 6-6 6z" />
            <path fill="#cfdef9" d="M7 28q-5-2-4-6 4-5 9 0 3-5 9-4 7 2 7 6 0 4-5 4z" />
          </Art>
          <div>
            26°C
            <Muted>Mostly cloudy</Muted>
          </div>
        </Weather>
        <AppButton aria-label="Start">
          <svg width="29" height="29" viewBox="0 0 29 29">
            <defs><linearGradient id="win" x1="0" y1="0" x2="1" y2="1"><stop offset="0" stopColor="#7af0fb" /><stop offset="1" stopColor="#0a95fb" /></linearGradient></defs>
            <path fill="url(#win)" d="M0 1q0-1 1-1h13v14H0zM15 0h13q1 0 1 1v13H15zM0 15h14v14H1q-1 0-1-1zM15 15h14v13q0 1-1 1H15z" />
          </svg>
        </AppButton>
        <SearchBox>
          <Icon s={20} box={20} w={2}><circle cx="9" cy="8.500" r="6.800" /><path d="M14 14l4.500 4.500" strokeWidth="2.500" /></Icon>
          <SearchInput type="text" placeholder="Search" aria-label="Search" />
        </SearchBox>
        <AppRow>
          {apps.map((a) => (
            <AppButton key={a.name} aria-label={a.name} $bg={a.bg} $mark={a.mark} $wide={a.wide}>
              {a.art}
              {a.badge}
            </AppButton>
          ))}
        </AppRow>
        <Tray>
          <TrayButton $w={40} aria-label="Show hidden icons"><Icon s={16} box={16} c="#fff"><path d="M2 11l6-6 6 6" /></Icon></TrayButton>
          <TrayButton $w={56}><span>ENG<br />US</span></TrayButton>
          <StatusIcons aria-label="Network, volume and battery">
            <Icon s={22} c="#fff" w={1.600}><path d="M2 9.500q10-9 20 0M5 13q7-6.500 14 0M8 16.500q4-3.800 8 0" /><circle cx="12" cy="19.500" r="1.300" fill="#fff" /></Icon>
            <Icon s={22} c="#fff" w={1.500}><path d="M2 9.500h4l5-4.500v14l-5-4.500H2zM14 9.500q2 2.500 0 5M17 7q4 5 0 10M20 4.500q5.500 7.500 0 15" /></Icon>
            <Icon s={22} c="#fff" w={1.600}><rect x="2" y="6" width="17" height="12" rx="3" /><path d="M4.500 8.500h8v7h-8z" fill="#fff" stroke="none" /><path d="M21.500 10.500v3" strokeWidth="3" /></Icon>
          </StatusIcons>
          <Clock>
            <span>19:35<br />03/12/2023</span>
            <svg width="18" height="20" viewBox="0 0 18 20" aria-hidden="true"><path fill="#99ebff" d="M9 0q7 0 7 8v4l2 4H0l2-4V8q0-8 7-8zM6 17h6q-1 3-3 3t-3-3z" /></svg>
            <DateTip>03 December 2023</DateTip>
          </Clock>
        </Tray>
      </TaskBar>
    </Screen>
  );
}
